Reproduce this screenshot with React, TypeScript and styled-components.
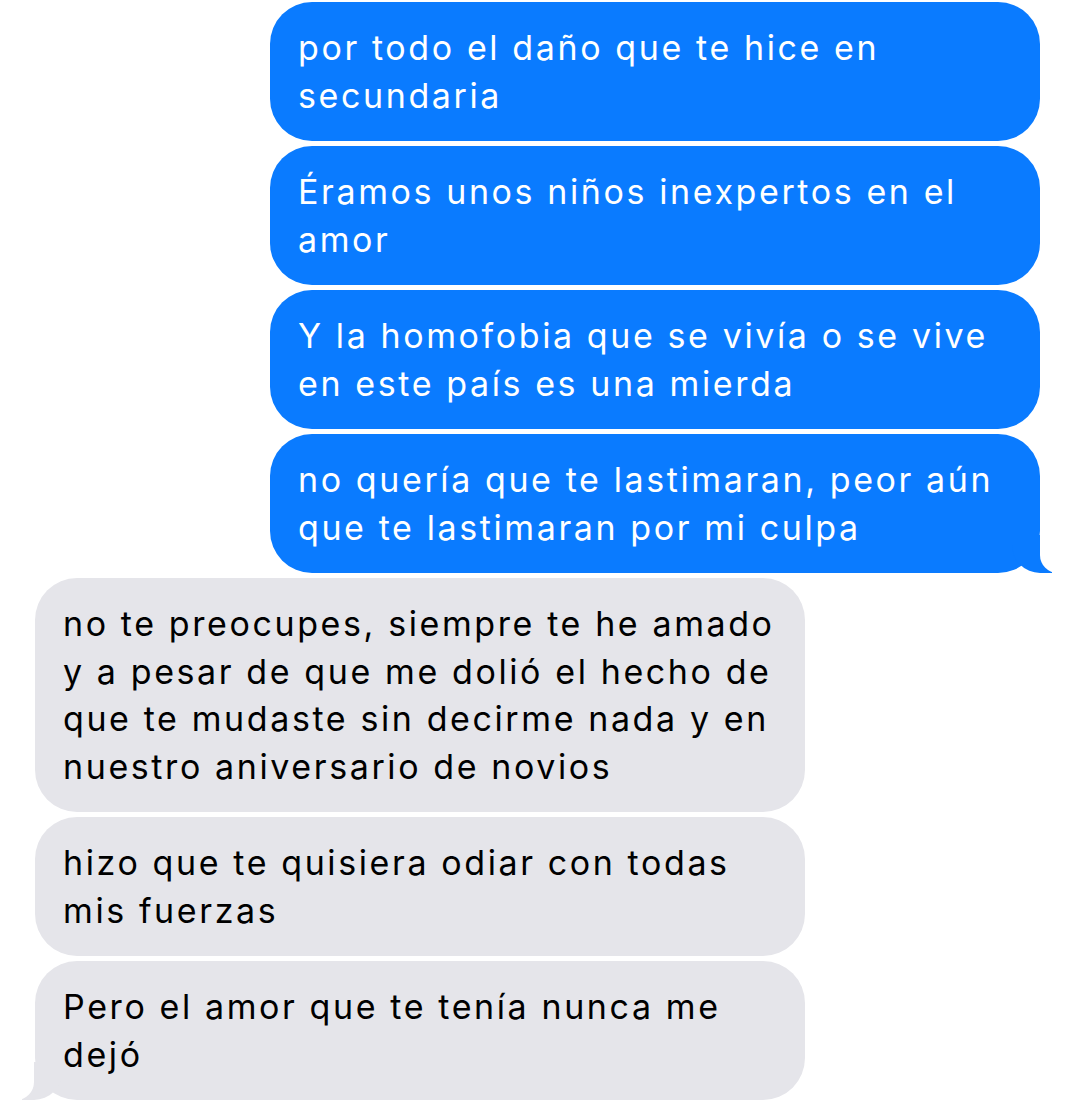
import styled, { createGlobalStyle } from "styled-components";

// 대화 데이터: 각 줄은 원본 줄바꿈 그대로
const messages: { from: "me" | "them"; lines: string[]; tail?: boolean }[] = [
  { from: "me", lines: ["por todo el daño que te hice en", "secundaria"] },
  { from: "me", lines: ["Éramos unos niños inexpertos en el", "amor"] },
  { from: "me", lines: ["Y la homofobia que se vivía o se vive", "en este país es una mierda"] },
  { from: "me", lines: ["no quería que te lastimaran, peor aún", "que te lastimaran por mi culpa"], tail: true },
  {
    from: "them",
    lines: [
      "no te preocupes, siempre te he amado",
      "y a pesar de que me dolió el hecho de",
      "que te mudaste sin decirme nada y en",
      "nuestro aniversario de novios",
    ],
  },
  { from: "them", lines: ["hizo que te quisiera odiar con todas", "mis fuerzas"] },
  { from: "them", lines: ["Pero el amor que te tenía nunca me", "dejó"], tail: true },
];

const App = () => {
  return (
    <>
      <GlobalStyle />
      <Thread>
        {messages.map((m, i) => (
          <Row key={i} $me={m.from === "me"}>
            <Bubble $me={m.from === "me"} $tail={!!m.tail}>
              {m.lines.map((l, j) => (
                <Line key={j}>{l}</Line>
              ))}
            </Bubble>
          </Row>
        ))}
      </Thread>
    </>
  );
};

export default App;

// 스타일
const GlobalStyle = createGlobalStyle`
  body {
    margin: 0;
    background: #ffffff;
    font-family: Inter, "Liberation Sans", Arial, sans-serif;
  }
`;

const Thread = styled.div`
  display: flex;
  flex-direction: column;
  gap: 5px;
  padding: 2px 36px 0 35px;
  width: 1076px;
  box-sizing: border-box;
`;

const Row = styled.div<{ $me: boolean }>`
  display: flex;
  justify-content: ${({ $me }) => ($me ? "flex-end" : "flex-start")};
`;

const Bubble = styled.div<{ $me: boolean; $tail: boolean }>`
  position: relative;
  width: 770px;
  box-sizing: border-box;
  padding: 22px 28px 22px;
  border-radius: 42px;
  background: ${({ $me }) => ($me ? "#0a7bff" : "#e5e5ea")};
  color: ${({ $me }) => ($me ? "#ffffff" : "#000000")};
  font-size: 34px;
  line-height: 47.5px;
  letter-spacing: 2.6px;

  ${({ $tail, $me }) =>
    $tail
      ? `
    &::before {
      content: "";
      position: absolute;
      bottom: 0;
      ${$me ? "right: -12px;" : "left: -13px;"}
      width: 40px;
      height: 38px;
      background: ${$me ? "#0a7bff" : "#e5e5ea"};
      ${$me ? "border-bottom-left-radius: 28px;" : "border-bottom-right-radius: 28px;"}
      z-index: 0;
    }
    &::after {
      content: "";
      position: absolute;
      bottom: 0;
      ${$me ? "right: -24px;" : "left: -25px;"}
      width: 24px;
      height: 40px;
      background: #ffffff;
      ${$me ? "border-bottom-left-radius: 18px;" : "border-bottom-right-radius: 18px;"}
      z-index: 1;
    }
  `
      : ""}
`;

const Line = styled.div`
  position: relative;
  z-index: 2;
  white-space: nowrap;
`;
